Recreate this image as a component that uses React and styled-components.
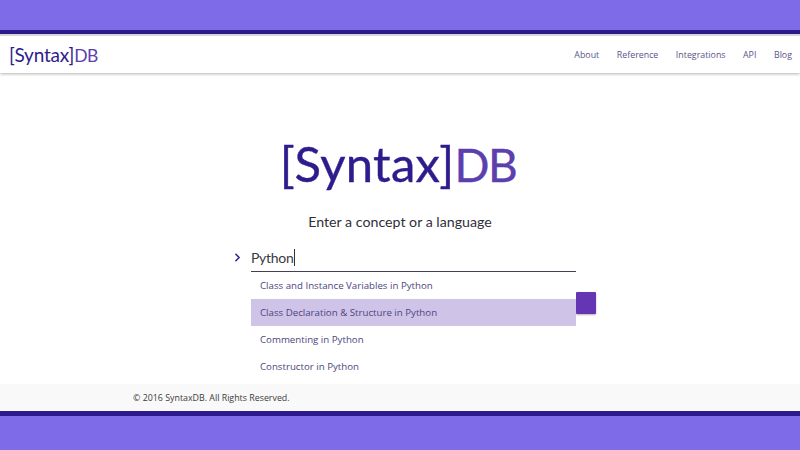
import React from "react";
import styled, { createGlobalStyle } from "styled-components";
import { ChevronRight } from "lucide-react";

const Global = createGlobalStyle`
  html, body { margin: 0; padding: 0; background: #fff; }
  * { box-sizing: border-box; }
`;

const Page = styled.div`
  width: 800px; height: 450px; overflow: hidden;
  display: flex; flex-direction: column;
  font-family: "Open Sans", "Liberation Sans", sans-serif;
  background: #fff;
`;
const Band = styled.div`
  flex: none; height: ${p => p.$h}px; background: #7e6be8;
`;
const TopRule = styled.div`
  flex: none; height: 4px; background: #2e1a8e;
`;
const Nav = styled.header`
  flex: none; height: 39px;
  border-top: 2px solid #d6d6d6;
  display: flex; align-items: center; justify-content: space-between;
  padding: 0 8px 0 9px;
  background: #fff;
  box-shadow: 0 1px 3px rgba(0,0,0,.3);
  position: relative;
`;
const SmallLogo = styled.div`
  font-family: Lato, sans-serif; font-size: 19px; line-height: 24px; color: #2f1c8c;
  letter-spacing: -0.2px;
  span { color: #5c3fae; font-size: 17.5px; letter-spacing: -0.5px; line-height: 1; }
`;
const Links = styled.nav`
  display: flex; gap: 17.5px; font-size: 8.85px; color: #5b5489;
`;
const Main = styled.main`
  flex: 1; min-height: 0; display: flex; flex-direction: column; align-items: center;
  padding-top: 55px;
`;
const BigLogo = styled.h1`
  margin: 0 0 0 -4px; height: 70px; font-family: Lato, sans-serif; font-weight: 400; font-size: 49px; line-height: 70px;
  color: #2f1c8c; letter-spacing: 0.3px;
  -webkit-text-stroke: 0.4px currentColor;
  span { color: #5c3fae; font-size: 46px; letter-spacing: -1.5px; line-height: 1; }
`;
const Prompt = styled.p`
  margin: 14px 0 0; font-family: Lato, sans-serif; font-size: 14.2px; line-height: 20px; color: #2f2f3a;
`;
const SearchArea = styled.div`
  position: relative; width: 342px; margin: 11px 0 0 10px;
  padding-left: 17px;
`;
const InputRow = styled.div`
  height: 29px; border-bottom: 1px solid #444050;
  display: flex; align-items: center;
  font-family: Lato, sans-serif; font-size: 14px; letter-spacing: -0.3px; color: #3a3a44;
`;
const Caret = styled.span`
  width: 1px; height: 17px; background: #333; margin-left: 1px;
`;
const Arrow = styled.span`
  position: absolute; left: -3px; top: 8px; display: flex; color: #3a2496;
`;
const Go = styled.div`
  position: absolute; right: -20px; top: 49px; width: 20px; height: 22px;
  border-radius: 1px; background: #6536b4;
  box-shadow: 0 1px 2px rgba(0,0,0,.3);
`;
const Menu = styled.ul`
  position: absolute; left: 17px; right: 0; top: 29px; margin: 0; padding: 0; list-style: none;
`;
const Item = styled.li`
  height: 27px; padding-left: 9px; display: flex; align-items: center;
  font-size: 9.7px; color: #4d4580;
  background: ${p => (p.$active ? "#cfc3e8" : "#fff")};
`;
const Footer = styled.footer`
  flex: none; height: 27px; background: #f9f9f9; position: relative;
  padding-left: 133px; display: flex; align-items: center;
  font-size: 8.85px; color: #3c3c3c;
`;
const BottomRule = styled.div`
  flex: none; height: 5px; background: #2e1a8e;
`;

const items = [
  "Class and Instance Variables in Python",
  "Class Declaration & Structure in Python",
  "Commenting in Python",
  "Constructor in Python",
];

export default function App() {
  return (
    <Page>
      <Global />
      <Band $h={30} />
      <TopRule />
      <Nav>
        <SmallLogo>[Syntax]<span>DB</span></SmallLogo>
        <Links>
          <span>About</span><span>Reference</span><span>Integrations</span><span>API</span><span>Blog</span>
        </Links>
      </Nav>
      <Main>
        <BigLogo>[Syntax]<span>DB</span></BigLogo>
        <Prompt>Enter a concept or a language</Prompt>
        <SearchArea>
          <Arrow><ChevronRight size={13} strokeWidth={3} /></Arrow>
          <InputRow>Python<Caret /></InputRow>
          <Go />
          <Menu>
            {items.map((t, i) => <Item key={t} $active={i === 1}>{t}</Item>)}
          </Menu>
        </SearchArea>
      </Main>
      <Footer>© 2016 SyntaxDB. All Rights Reserved.</Footer>
      <BottomRule />
      <Band $h={34} />
    </Page>
  );
}
